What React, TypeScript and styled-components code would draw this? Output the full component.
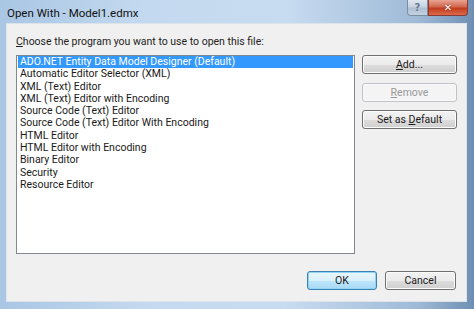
import React from "react";
import styled, { createGlobalStyle } from "styled-components";

const Global = createGlobalStyle`
  html, body { margin: 0; padding: 0; background: #b9d1ea; }
  body { font-family: Roboto, "Noto Sans", sans-serif; overflow: hidden; }
  * { box-sizing: border-box; }
`;

const Window = styled.div`
  width: 474px;
  height: 309px;
  display: flex;
  flex-direction: column;
  background: linear-gradient(90deg, #a9c6e4 0%, #c3d9ef 30%, #c8dcf1 60%, #9fbad7 88%, #6f8fb2 100%);
  padding: 0 7px 7px 6px;
`;

const TitleBar = styled.div`
  height: 23px;
  display: flex;
  justify-content: space-between;
  align-items: flex-start;
  margin-right: -1px;
`;

const Title = styled.div`
  font-size: 11.5px;
  line-height: 14px;
  padding: 6px 0 0 1px;
  color: #111111;
`;

const Captions = styled.div`
  display: flex;
  height: 16px;
`;

const CaptionButton = styled.div<{ $close?: boolean }>`
  width: ${(p) => (p.$close ? "40px" : "21px")};
  height: 16px;
  display: flex;
  align-items: center;
  justify-content: center;
  font-family: "DejaVu Sans", sans-serif;
  font-size: 10px;
  font-weight: bold;
  color: ${(p) => (p.$close ? "#ffffff" : "#6b7c8f")};
  border: 1px solid ${(p) => (p.$close ? "#8a3a32" : "#7d8da0")};
  border-top: none;
  border-radius: ${(p) => (p.$close ? "0 0 4px 0" : "0 0 0 4px")};
  background: ${(p) =>
    p.$close
      ? "linear-gradient(180deg, #e8a493 0%, #d2684f 45%, #c43b1e 55%, #d96b4c 100%)"
      : "linear-gradient(180deg, #dfe7ef 0%, #c6d3e0 45%, #afc0d2 55%, #c3d2e1 100%)"};
  text-shadow: ${(p) => (p.$close ? "0 0 2px #6a1d10" : "none")};
`;

const Client = styled.div`
  flex: 1;
  display: flex;
  flex-direction: column;
  background: #f0f0f0;
  border: 1px solid #dde3ea;
  padding: 10px 9px 11px 9px;
`;

const Label = styled.div`
  font-size: 10.5px;
  line-height: 16px;
  color: #1e1e1e;
  margin-bottom: 5px;
`;

const Key = styled.span`
  text-decoration: underline;
`;

const Main = styled.div`
  display: flex;
  gap: 7px;
`;

const ListBox = styled.div`
  width: 339px;
  height: 199px;
  background: #ffffff;
  border: 1px solid #828790;
  padding: 0 1px;
  display: flex;
  flex-direction: column;
`;

const Item = styled.div<{ $selected?: boolean }>`
  height: 12.3px;
  font-size: 10.5px;
  line-height: 12.3px;
  padding-left: 2px;
  white-space: nowrap;
  color: ${(p) => (p.$selected ? "#ffffff" : "#1a1a1a")};
  background: ${(p) => (p.$selected ? "#3399ff" : "transparent")};
`;

const Side = styled.div`
  display: flex;
  flex-direction: column;
  gap: 8.5px;
`;

const Button = styled.div<{ $disabled?: boolean; $default?: boolean; $w?: number }>`
  width: ${(p) => p.$w ?? 95}px;
  height: 19px;
  display: flex;
  align-items: center;
  justify-content: center;
  font-size: 10.5px;
  border-radius: 3px;
  color: ${(p) => (p.$disabled ? "#9a9a9a" : "#1a1a1a")};
  border: 1px solid ${(p) => (p.$disabled ? "#c0c4c8" : p.$default ? "#3c7fb1" : "#707070")};
  background: ${(p) =>
    p.$disabled
      ? "#f4f4f4"
      : p.$default
      ? "linear-gradient(180deg, #eaf6fd 0%, #d9f0fc 50%, #bee6fd 51%, #a7d9f5 100%)"
      : "linear-gradient(180deg, #f2f2f2 0%, #ebebeb 50%, #dddddd 51%, #cfcfcf 100%)"};
  box-shadow: inset 0 0 0 1px ${(p) => (p.$disabled ? "#f8f8f8" : p.$default ? "#8fd3f5" : "#fcfcfc")};
`;

const Footer = styled.div`
  margin-top: auto;
  display: flex;
  justify-content: flex-end;
  gap: 8px;
  padding-right: 1px;
`;

const items = [
  "ADO.NET Entity Data Model Designer (Default)",
  "Automatic Editor Selector (XML)",
  "XML (Text) Editor",
  "XML (Text) Editor with Encoding",
  "Source Code (Text) Editor",
  "Source Code (Text) Editor With Encoding",
  "HTML Editor",
  "HTML Editor with Encoding",
  "Binary Editor",
  "Security",
  "Resource Editor",
];

export default function App() {
  return (
    <>
      <Global />
      <Window>
        <TitleBar>
          <Title>Open With - Model1.edmx</Title>
          <Captions>
            <CaptionButton>?</CaptionButton>
            <CaptionButton $close>✕</CaptionButton>
          </Captions>
        </TitleBar>
        <Client>
          <Label>
            <Key>C</Key>hoose the program you want to use to open this file:
          </Label>
          <Main>
            <ListBox>
              {items.map((t, i) => (
                <Item key={t} $selected={i === 0}>
                  {t}
                </Item>
              ))}
            </ListBox>
            <Side>
              <Button>
                <Key>A</Key>dd...
              </Button>
              <Button $disabled>
                <Key>R</Key>emove
              </Button>
              <Button>
                Set as&nbsp;<Key>D</Key>efault
              </Button>
            </Side>
          </Main>
          <Footer>
            <Button $default $w={70}>OK</Button>
            <Button $w={71}>Cancel</Button>
          </Footer>
        </Client>
      </Window>
    </>
  );
}
